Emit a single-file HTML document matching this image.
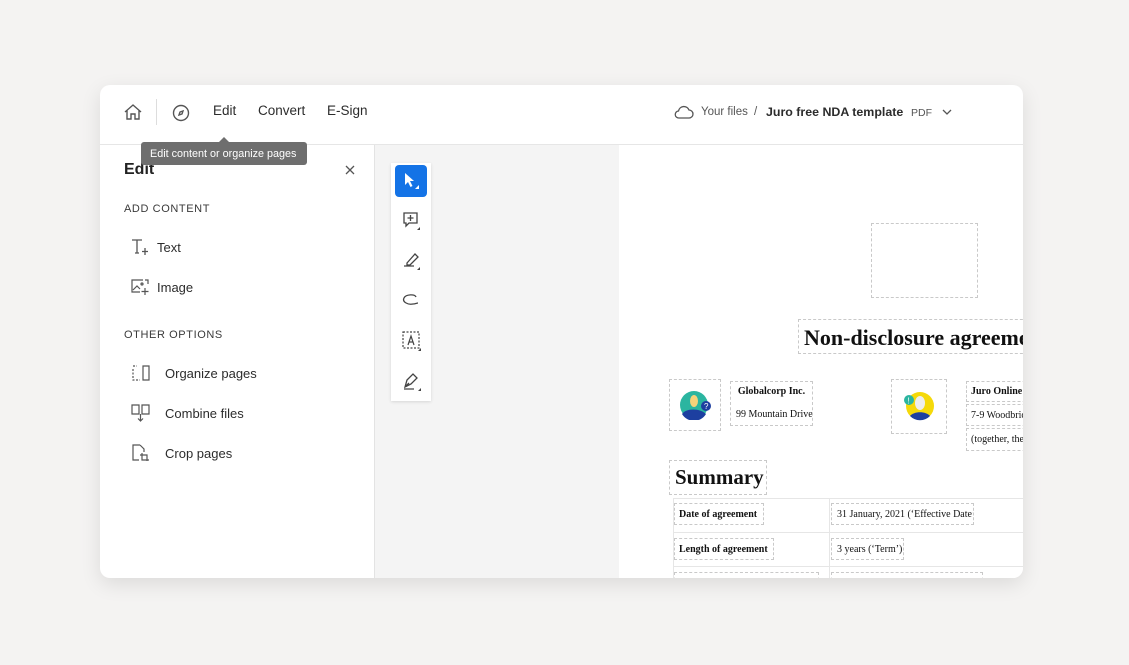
<!DOCTYPE html>
<html><head><meta charset="utf-8"><style>
*{box-sizing:border-box;margin:0;padding:0}
body{width:1129px;height:665px;background:#f4f3f2;font-family:"Liberation Sans",sans-serif;position:relative;overflow:hidden;color:#2c2c2c}
.card{position:absolute;left:100px;top:85px;width:923px;height:493px;background:#fff;border-radius:10px;box-shadow:0 6px 20px rgba(0,0,0,.10);overflow:hidden}
.hdr{position:absolute;left:0;top:0;width:923px;height:60px;border-bottom:1px solid #e6e6e6}
.a{position:absolute;white-space:nowrap}
.nav{font-size:13.5px;color:#2c2c2c;top:18px}
.left{position:absolute;left:0;top:60px;width:275px;height:433px;border-right:1px solid #e3e3e3}
.gray{position:absolute;left:275px;top:60px;width:244px;height:433px;background:#f4f4f4}
.doc{position:absolute;left:519px;top:60px;width:404px;height:433px;background:#fff}
.sec{font-size:11px;letter-spacing:.6px;color:#3a3a3a}
.item{font-size:13px;color:#2c2c2c}
.d{position:absolute;border:1px dashed #c9c9c9;font-family:"Liberation Serif",serif;white-space:nowrap;color:#111;overflow:hidden}
.tb{position:absolute;left:291px;top:78px;width:40px;height:238px;background:#fff;box-shadow:0 1px 3px rgba(0,0,0,.12)}
svg{position:absolute}
</style></head><body>
<div class="card">
 <div class="hdr">
  <svg style="left:23px;top:18px" width="20" height="18" viewBox="0 0 20 18" fill="none" stroke="#555" stroke-width="1.4"><path d="M2 9L10 2l8 7M4 7.5V16h4v-5h4v5h4V7.5"/></svg>
  <div class="a" style="left:56px;top:14px;width:1px;height:26px;background:#ddd"></div>
  <svg style="left:72px;top:19px" width="18" height="18" viewBox="0 0 18 18" fill="none" stroke="#555" stroke-width="1.4"><circle cx="9" cy="9" r="7.5"/><path d="M7 11l1-3 3-1-1 3z"/></svg>
  <div class="a nav" style="left:113px">Edit</div>
  <div class="a nav" style="left:158px">Convert</div>
  <div class="a nav" style="left:227px">E-Sign</div>
  <svg style="left:574px;top:20px" width="20" height="14" viewBox="0 0 20 14" fill="none" stroke="#555" stroke-width="1.3"><path d="M5 13h10a4 4 0 0 0 0-8 5.5 5.5 0 0 0-10.5 1A3.5 3.5 0 0 0 5 13z"/></svg>
  <div class="a" style="left:601px;top:21px;font-size:11.5px;color:#555">Your files</div>
  <div class="a" style="left:654px;top:21px;font-size:11.5px;color:#555">/</div>
  <div class="a" style="left:666px;top:20px;font-size:12.4px;font-weight:bold;color:#2c2c2c">Juro free NDA template</div>
  <div class="a" style="left:811px;top:22px;font-size:10.5px;color:#555">PDF</div>
  <svg style="left:842px;top:24px" width="10" height="7" viewBox="0 0 10 7" fill="none" stroke="#555" stroke-width="1.3"><path d="M1 1l4 4 4-4"/></svg>
 </div>
 <div class="left">
  <div class="a" style="left:24px;top:16px;font-size:16px;font-weight:bold;color:#222">Edit</div>
  <svg style="left:244px;top:19px" width="12" height="12" viewBox="0 0 12 12" stroke="#555" stroke-width="1.3"><path d="M2 2l8 8M10 2l-8 8"/></svg>
  <div class="a sec" style="left:24px;top:58px">ADD CONTENT</div>
  <svg style="left:31px;top:93px" width="20" height="18" viewBox="0 0 20 18" fill="none" stroke="#555" stroke-width="1.3"><path d="M1 2h10M6 2v13M4 15h4M14 10v7M11 13.5h6"/></svg>
  <div class="a item" style="left:57px;top:95px">Text</div>
  <svg style="left:31px;top:134px" width="20" height="17" viewBox="0 0 20 17" fill="none" stroke="#555" stroke-width="1.2"><path d="M12 1H1v12h8M2 11l4-4 3 3M14 1h3v4M14 9v7M10.5 12.5h7"/><circle cx="11" cy="5" r="1"/></svg>
  <div class="a item" style="left:57px;top:135px">Image</div>
  <div class="a sec" style="left:24px;top:184px">OTHER OPTIONS</div>
  <svg style="left:31px;top:219px" width="20" height="18" viewBox="0 0 20 18" fill="none" stroke="#555" stroke-width="1.2"><path d="M12 2h6v14h-6z"/><path d="M2 5v11h7M2 2h4" stroke-dasharray="2 1.5"/></svg>
  <div class="a item" style="left:65px;top:221px">Organize pages</div>
  <svg style="left:31px;top:259px" width="20" height="18" viewBox="0 0 20 18" fill="none" stroke="#555" stroke-width="1.2"><path d="M1 1h7v9H1zM11 1h7v9h-7zM9.5 10v7M7 14.5l2.5 2.5 2.5-2.5"/></svg>
  <div class="a item" style="left:65px;top:261px">Combine files</div>
  <svg style="left:31px;top:299px" width="20" height="18" viewBox="0 0 20 18" fill="none" stroke="#555" stroke-width="1.2"><path d="M9 1H2v15h6M9 1l4 4v3M11 9v7h7M9 11h7v6"/></svg>
  <div class="a item" style="left:65px;top:301px">Crop pages</div>
 </div>
 <div class="gray"></div>
 <div class="tb">
  <div class="a" style="left:4px;top:2px;width:32px;height:32px;background:#1473e6;border-radius:4px"></div>
  <svg style="left:13px;top:9px" width="16" height="18" viewBox="0 0 16 18" fill="#fff"><path d="M1 1v12l3-3 2.5 5 2-1-2.5-5H10z"/><path d="M15 13v4h-4z"/></svg>
  <svg style="left:11px;top:48px" width="20" height="20" viewBox="0 0 20 20" fill="none" stroke="#444" stroke-width="1.3"><path d="M2 2h13v10H7l-3 3v-3H2zM8.5 4v6M5.5 7h6"/><path d="M18 16v3h-3z" fill="#444" stroke="none"/></svg>
  <svg style="left:11px;top:88px" width="20" height="20" viewBox="0 0 20 20" fill="none" stroke="#444" stroke-width="1.3"><path d="M5 12L13 3l3 3-8 8H5zM2 15h10" /><path d="M18 16v3h-3z" fill="#444" stroke="none"/></svg>
  <svg style="left:11px;top:130px" width="20" height="14" viewBox="0 0 20 14" fill="none" stroke="#444" stroke-width="1.3"><path d="M14 4C13 1 4 1 2 5s4 7 9 6c2 0 4-1 5-1"/></svg>
  <svg style="left:11px;top:168px" width="20" height="20" viewBox="0 0 20 20" fill="none" stroke="#444" stroke-width="1.2"><rect x="1" y="1" width="16" height="16" stroke-dasharray="2 1.5"/><path d="M6 14l3-9 3 9M7 11h4"/><path d="M19 17v3h-3z" fill="#444" stroke="none"/></svg>
  <svg style="left:11px;top:208px" width="20" height="20" viewBox="0 0 20 20" fill="none" stroke="#444" stroke-width="1.3"><path d="M3 16l2-7 6-6 4 4-6 6zM3 16l4-4M2 18h10"/><path d="M19 17v3h-3z" fill="#444" stroke="none"/></svg>
 </div>
 <div class="doc">
  <div class="d" style="left:252px;top:78px;width:107px;height:75px"></div>
  <div class="d" style="left:179px;top:174px;width:240px;height:35px;padding:5px 5px;font-size:22px;font-weight:bold">Non-disclosure agreement</div>
  <div class="d" style="left:50px;top:234px;width:52px;height:52px">
   <svg style="left:10px;top:10px" width="32" height="30" viewBox="0 0 32 30"><circle cx="14" cy="15" r="14" fill="#2bb5a0"/><path d="M2 24c4-6 18-6 24 0a14 14 0 0 1-24 0z" fill="#1d3fa0"/><ellipse cx="14" cy="11" rx="4" ry="6" fill="#f6d27a"/><circle cx="26" cy="16" r="5" fill="#1d3fa0"/><text x="24" y="19" font-size="8" fill="#fff" font-family="Liberation Sans">?</text></svg>
  </div>
  <div class="d" style="left:111px;top:236px;width:83px;height:45px;font-size:10px;padding:0 6px"><b style="position:absolute;left:0;width:81px;top:4px;text-align:center">Globalcorp Inc.</b><span style="position:absolute;left:5px;top:27px">99 Mountain Drive</span></div>
  <div class="d" style="left:272px;top:234px;width:56px;height:55px">
   <svg style="left:10px;top:10px" width="34" height="32" viewBox="0 0 34 32"><circle cx="18" cy="16" r="14" fill="#f5d90a"/><path d="M8 26c4-5 16-5 20 0a14 14 0 0 1-20 0z" fill="#1d3fa0"/><ellipse cx="18" cy="13" rx="5" ry="7" fill="#eee"/><circle cx="7" cy="10" r="5" fill="#2bb5a0"/><text x="5.5" y="13.5" font-size="8" fill="#fff" font-family="Liberation Sans">!</text></svg>
  </div>
  <div class="d" style="left:347px;top:236px;width:70px;height:21px;font-size:10px;padding:4px 4px;font-weight:bold">Juro Online</div>
  <div class="d" style="left:347px;top:259px;width:70px;height:22px;font-size:10px;padding:5px 4px">7-9 Woodbridge</div>
  <div class="d" style="left:347px;top:283px;width:70px;height:23px;font-size:10px;padding:5px 4px">(together, the</div>
  <div class="d" style="left:50px;top:315px;width:98px;height:35px;font-size:21px;font-weight:bold;padding:4px 5px">Summary</div>
  <div class="a" style="left:54px;top:353px;width:350px;height:1px;background:#e6e6e6"></div>
  <div class="a" style="left:54px;top:387px;width:350px;height:1px;background:#e6e6e6"></div>
  <div class="a" style="left:54px;top:421px;width:350px;height:1px;background:#e6e6e6"></div>
  <div class="a" style="left:54px;top:353px;width:1px;height:80px;background:#e6e6e6"></div>
  <div class="a" style="left:210px;top:353px;width:1px;height:80px;background:#e6e6e6"></div>
  <div class="d" style="left:55px;top:358px;width:90px;height:22px;font-size:10px;font-weight:bold;padding:5px 4px">Date of agreement</div>
  <div class="d" style="left:212px;top:358px;width:143px;height:22px;font-size:10px;padding:5px 5px">31 January, 2021 (‘Effective Date’)</div>
  <div class="d" style="left:55px;top:393px;width:100px;height:22px;font-size:10px;font-weight:bold;padding:5px 4px">Length of agreement</div>
  <div class="d" style="left:212px;top:393px;width:73px;height:22px;font-size:10px;padding:5px 5px">3 years (‘Term’)</div>
  <div class="d" style="left:55px;top:427px;width:145px;height:20px"></div>
  <div class="d" style="left:212px;top:427px;width:152px;height:20px"></div>
 </div>
</div>
<div class="a" style="left:141px;top:142px;width:166px;height:23px;background:#6e6e6e;border-radius:3px;color:#fff;font-size:10.8px;padding:6px 9px">Edit content or organize pages</div>
<div class="a" style="left:219px;top:137px;width:0;height:0;border-left:5px solid transparent;border-right:5px solid transparent;border-bottom:5px solid #6e6e6e"></div>
</body></html>
